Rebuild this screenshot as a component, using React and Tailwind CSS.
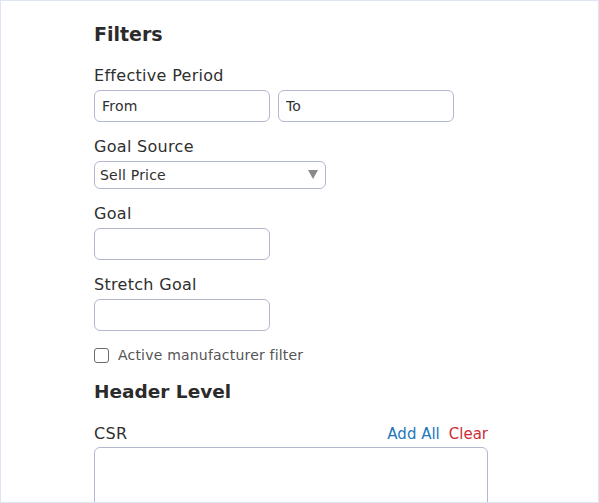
import { useState } from "react";

function Label({ children, className = "" }) {
  return <div className={`text-[16px] leading-[20px] tracking-[0.3px] text-[#2f2f2f] ${className}`}>{children}</div>;
}

function TextBox({ placeholder, className = "" }) {
  return (
    <input
      type="text"
      placeholder={placeholder}
      className={`h-[32px] w-[176px] rounded-[6px] border border-[#b3b7cf] bg-white px-[7px] text-[14px] tracking-[0.2px] text-[#2f2f2f] placeholder:text-[#2f2f2f] outline-none ${className}`}
    />
  );
}

export default function App() {
  const [active, setActive] = useState(false);

  return (
    <div
      className="h-screen w-full overflow-hidden border border-[#dfe4f4] bg-white"
      style={{ fontFamily: '"DejaVu Sans", "Liberation Sans", sans-serif' }}
    >
      <div className="ml-[93px] w-[394px] pt-[21px]">
        <h2 className="text-[19px] font-bold leading-[24px] text-[#2b2b2b]">Filters</h2>

        <Label className="mt-[20px]">Effective Period</Label>
        <div className="mt-[4px] flex gap-[8px]">
          <TextBox placeholder="From" />
          <TextBox placeholder="To" />
        </div>

        <Label className="mt-[15px]">Goal Source</Label>
        <div className="relative mt-[4px] h-[28px] w-[232px]">
          <select className="h-full w-full appearance-none rounded-[6px] border border-[#b3b7cf] bg-white px-[5px] text-[14px] tracking-[0.2px] text-[#2f2f2f] outline-none">
            <option>Sell Price</option>
            <option>Cost</option>
          </select>
          <span className="pointer-events-none absolute right-[8px] top-[9px] h-0 w-0 border-x-[5px] border-t-[9px] border-x-transparent border-t-[#8a8a8a]" />
        </div>

        <Label className="mt-[15px]">Goal</Label>
        <TextBox className="mt-[4px]" />

        <Label className="mt-[15px]">Stretch Goal</Label>
        <TextBox className="mt-[4px]" />

        <label className="mt-[14px] flex h-[20px] cursor-pointer items-center gap-[9px]">
          <input
            type="checkbox"
            checked={active}
            onChange={(e) => setActive(e.target.checked)}
            className="h-[15px] w-[15px] appearance-none rounded-[3px] border border-[#6b6b6b] bg-white"
          />
          <span className="text-[14px] tracking-[0.2px] text-[#555]">Active manufacturer filter</span>
        </label>

        <h2 className="mt-[15px] text-[18.5px] font-bold leading-[24px] text-[#2b2b2b]">Header Level</h2>

        <div className="mt-[20px] flex items-center justify-between">
          <Label>CSR</Label>
          <div className="flex gap-[9px] text-[15px] leading-[20px]">
            <button className="text-[#2277bb]">Add All</button>
            <button className="text-[#cc2f37]">Clear</button>
          </div>
        </div>
        <textarea className="mt-[3px] block h-[110px] w-[394px] resize-none rounded-[6px] border border-[#b3b7cf] bg-white outline-none" />
      </div>
    </div>
  );
}
